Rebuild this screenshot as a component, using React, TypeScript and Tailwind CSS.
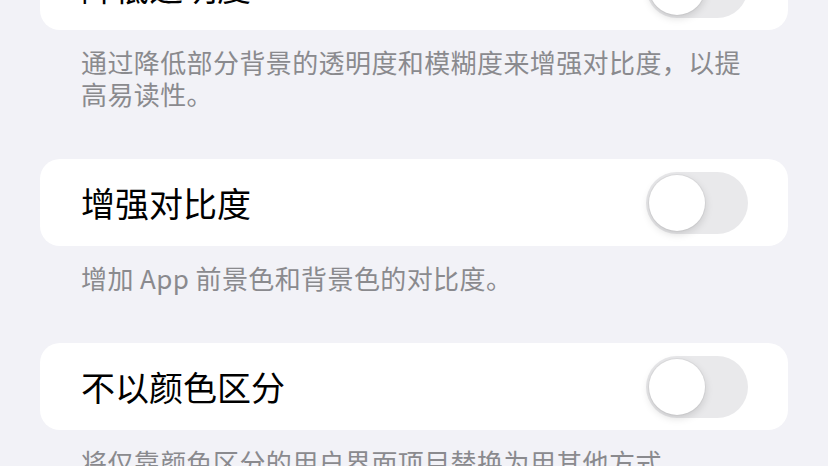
const font = {
  fontFamily: '"Noto Sans CJK SC", "Noto Sans", sans-serif',
};

interface SettingProps {
  title: string;
  footer: string;
}

function Toggle() {
  return (
    <div className="flex h-[62px] w-[102px] shrink-0 items-center rounded-full bg-[#e9e9eb] px-[3px]">
      <div className="h-[56px] w-[56px] rounded-full bg-white shadow-[0_3px_8px_rgba(0,0,0,0.15),0_0_0_1px_rgba(0,0,0,0.04)]" />
    </div>
  );
}

function SettingSection({ title, footer }: SettingProps) {
  return (
    <div className="flex flex-col">
      <div className="mx-[40px] flex h-[87px] items-center justify-between rounded-[20px] bg-white pl-[41px] pr-[40px]">
        <span className="text-[34px] leading-none text-black">{title}</span>
        <Toggle />
      </div>
      <p className="pt-[16px] pr-[78px] pb-[49px] pl-[81px] text-[26px] leading-[32px] tracking-[0.4px] text-[#8a8a8e]">
        {footer}
      </p>
    </div>
  );
}

export default function App() {
  return (
    <div className="h-[466px] w-[828px] overflow-hidden bg-[#f2f2f7]" style={font}>
      <div className="-mt-[57px] flex flex-col">
        <SettingSection
          title="降低透明度"
          footer="通过降低部分背景的透明度和模糊度来增强对比度，以提高易读性。"
        />
        <SettingSection title="增强对比度" footer="增加 App 前景色和背景色的对比度。" />
        <SettingSection title="不以颜色区分" footer="将仅靠颜色区分的用户界面项目替换为用其他方式" />
      </div>
    </div>
  );
}
